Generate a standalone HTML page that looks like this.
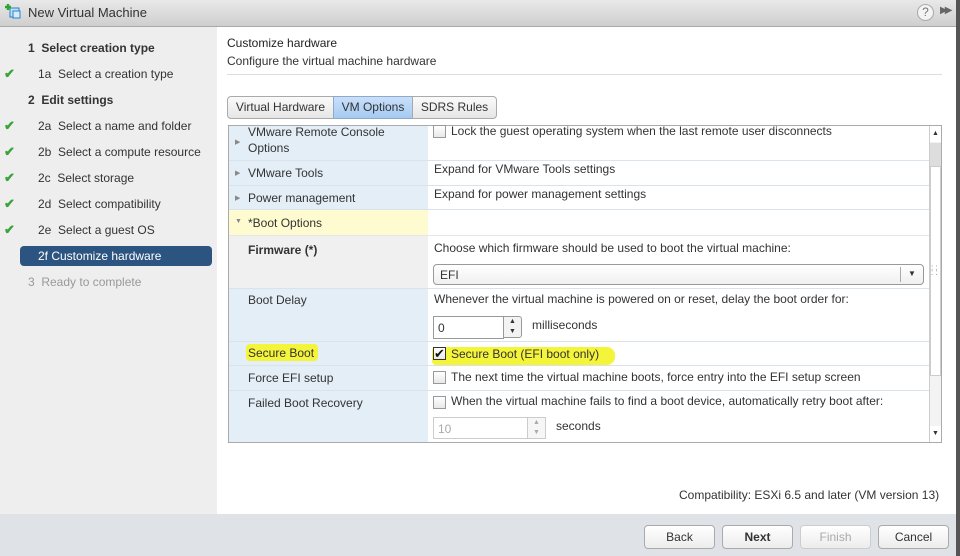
<!DOCTYPE html>
<html><head><meta charset="utf-8"><style>
*{box-sizing:border-box;margin:0;padding:0}
body{width:960px;height:556px;overflow:hidden;font-family:"Liberation Sans",Arial,sans-serif;font-size:12px;color:#333;background:#fff;position:relative}
.abs{position:absolute}
#title{left:0;top:0;width:960px;height:27px;background:linear-gradient(#e9e9e9,#cfcfcf);border-bottom:1px solid #a9a9a9}
#title .t{left:28px;top:5px;font-size:13px;color:#333}
#nav{left:0;top:27px;width:217px;height:487px;background:#eeeeee}
.ni{position:absolute;font-size:12px;color:#333;white-space:nowrap}
.ck{position:absolute;left:4px;color:#3aa33a;font-size:13px;font-weight:bold}
#main{left:217px;top:27px;width:739px;height:487px;background:#fff}
#rb{left:956px;top:0px;width:4px;height:556px;background:#555}
#foot{left:0;top:514px;width:956px;height:42px;background:#dfe3e8}
.btn{position:absolute;top:525px;height:24px;border:1px solid #aaa;border-radius:4px;background:linear-gradient(#fff,#ececec);text-align:center;line-height:22px;font-size:12px;color:#333}
.tab{position:absolute;top:96px;height:23px;border:1px solid #aaa;line-height:21px;text-align:center;font-size:12px;color:#333;background:linear-gradient(#fafafa,#e6e6e6)}
.row{position:absolute;left:229px;width:700px;border-bottom:1px solid #dbe3ea}
.lc{position:absolute;left:0;top:0;bottom:0;width:199px;background:#e4eef6}
.lt{position:absolute;font-size:12px;color:#333;white-space:nowrap}
.rt{position:absolute;left:205px;font-size:12px;color:#333;white-space:nowrap}
.cb{position:absolute;width:13px;height:13px;border:1px solid #999;background:linear-gradient(#fff,#e8e8e8)}
.ar{position:absolute;left:6px;font-size:7px;color:#888}
</style></head><body>
<div id="title" class="abs">
<svg class="abs" style="left:5px;top:3px" width="16" height="16" viewBox="0 0 16 16"><rect x="5" y="5" width="9" height="9" fill="#bfe0f7" stroke="#2a7fc9"/><rect x="8" y="8" width="7" height="7" fill="#d7ecfb" stroke="#2a7fc9"/><path d="M3 1v6M0 4h6" stroke="#2da52d" stroke-width="2.4"/></svg>
<div class="abs t">New Virtual Machine</div>
<div class="abs" style="left:917px;top:4px;width:17px;height:17px;border-radius:50%;border:1px solid #aaa;background:#f4f4f4;text-align:center;line-height:15px;font-size:12px;color:#777">?</div>
<div class="abs" style="left:940px;top:5px;font-size:10px;color:#666;letter-spacing:-3px">▶▶</div>
</div>
<div id="nav" class="abs">
<div class="ni" style="left:28px;top:14px;font-weight:bold">1&nbsp; Select creation type</div>
<div class="ck" style="top:39px">✔</div><div class="ni" style="left:38px;top:40px">1a&nbsp; Select a creation type</div>
<div class="ni" style="left:28px;top:66px;font-weight:bold">2&nbsp; Edit settings</div>
<div class="ck" style="top:91px">✔</div><div class="ni" style="left:38px;top:92px">2a&nbsp; Select a name and folder</div>
<div class="ck" style="top:117px">✔</div><div class="ni" style="left:38px;top:118px">2b&nbsp; Select a compute resource</div>
<div class="ck" style="top:143px">✔</div><div class="ni" style="left:38px;top:144px">2c&nbsp; Select storage</div>
<div class="ck" style="top:169px">✔</div><div class="ni" style="left:38px;top:170px">2d&nbsp; Select compatibility</div>
<div class="ck" style="top:195px">✔</div><div class="ni" style="left:38px;top:196px">2e&nbsp; Select a guest OS</div>
<div class="abs" style="left:20px;top:219px;width:192px;height:20px;background:#2c5480;border-radius:4px"></div>
<div class="ni" style="left:38px;top:222px;color:#fff">2f&nbsp;Customize hardware</div>
<div class="ni" style="left:28px;top:248px;color:#999">3&nbsp; Ready to complete</div>
</div>
<div id="main" class="abs">
<div class="abs" style="left:10px;top:9px;font-size:12px;color:#222">Customize hardware</div>
<div class="abs" style="left:10px;top:27px;font-size:12px;color:#333">Configure the virtual machine hardware</div>
<div class="abs" style="left:10px;top:47px;width:715px;height:1px;background:#ddd"></div>
</div>
<div id="rb" class="abs"></div>
<div class="tab" style="left:227px;width:107px;border-radius:4px 0 0 4px">Virtual Hardware</div>
<div class="tab" style="left:333px;width:80px;background:linear-gradient(#c9e0fa,#a5cbf2);border-color:#8fa9c9">VM Options</div>
<div class="tab" style="left:412px;width:85px;border-radius:0 4px 4px 0">SDRS Rules</div>
<div class="abs" style="left:228px;top:125px;width:714px;height:318px;border:1px solid #aaa;background:#fff"></div>
<div class="row" style="top:126px;height:35px"><div class="lc"></div><div class="ar" style="top:12px">▶</div><div class="lt" style="left:19px;top:-2px;line-height:16px">VMware Remote Console<br>Options</div><div class="cb" style="left:204px;top:-1px"></div><div class="rt" style="left:222px;top:-2px">Lock the guest operating system when the last remote user disconnects</div></div>
<div class="row" style="top:161px;height:25px"><div class="lc"></div><div class="ar" style="top:8px">▶</div><div class="lt" style="left:19px;top:5px">VMware Tools</div><div class="rt" style="top:1px">Expand for VMware Tools settings</div></div>
<div class="row" style="top:186px;height:24px"><div class="lc"></div><div class="ar" style="top:8px">▶</div><div class="lt" style="left:19px;top:5px">Power management</div><div class="rt" style="top:1px">Expand for power management settings</div></div>
<div class="row" style="top:210px;height:26px;border-color:#e6e6e6"><div class="lc" style="background:#fdfbcf"></div><div class="ar" style="top:8px">▼</div><div class="lt" style="left:19px;top:6px">*Boot Options</div></div>
<div class="row" style="top:236px;height:53px"><div class="lc" style="background:#f0f0f0"></div><div class="lt" style="left:19px;top:7px;font-weight:bold">Firmware (*)</div><div class="rt" style="top:5px">Choose which firmware should be used to boot the virtual machine:</div>
<div class="abs" style="left:204px;top:28px;width:491px;height:21px;border:1px solid #999;border-radius:4px;background:linear-gradient(#fff,#f0f0f0)"><span class="abs" style="left:6px;top:3px">EFI</span><div class="abs" style="left:466px;top:2px;width:1px;height:15px;background:#aaa"></div><span class="abs" style="left:474px;top:4px;font-size:8px">▼</span></div></div>
<div class="row" style="top:289px;height:53px"><div class="lc"></div><div class="lt" style="left:19px;top:4px">Boot Delay</div><div class="rt" style="top:3px">Whenever the virtual machine is powered on or reset, delay the boot order for:</div>
<div class="abs" style="left:204px;top:27px;width:71px;height:23px;border:1px solid #999;background:#fff"><span class="abs" style="left:4px;top:4px">0</span></div><div class="abs" style="left:274px;top:27px;width:19px;height:22px;border:1px solid #999;border-radius:0 3px 3px 0;background:#f3f3f3;font-size:7px;text-align:center;line-height:10px">▲<br>▼</div><div class="rt" style="left:303px;top:29px">milliseconds</div></div>
<div class="row" style="top:342px;height:24px"><div class="lc"></div><div class="abs" style="left:17px;top:2px;width:72px;height:17px;background:#f4f43a;border-radius:4px"></div><div class="lt" style="left:19px;top:4px">Secure Boot</div>
<div class="abs" style="left:203px;top:5px;width:183px;height:18px;background:#f4f43a;border-radius:4px 8px 8px 4px"></div><div class="cb" style="left:204px;top:5px;border-color:#333;font-size:13px;line-height:11px;color:#111">✔</div><div class="rt" style="left:222px;top:5px">Secure Boot (EFI boot only)</div></div>
<div class="row" style="top:366px;height:25px"><div class="lc"></div><div class="lt" style="left:19px;top:5px">Force EFI setup</div><div class="cb" style="left:204px;top:5px"></div><div class="rt" style="left:222px;top:4px">The next time the virtual machine boots, force entry into the EFI setup screen</div></div>
<div class="row" style="top:391px;height:51px;border:none"><div class="lc"></div><div class="lt" style="left:19px;top:5px">Failed Boot Recovery</div><div class="cb" style="left:204px;top:5px"></div><div class="rt" style="left:222px;top:3px">When the virtual machine fails to find a boot device, automatically retry boot after:</div>
<div class="abs" style="left:204px;top:26px;width:95px;height:22px;border:1px solid #ccc;background:#fff"><span class="abs" style="left:4px;top:4px;color:#aaa">10</span></div><div class="abs" style="left:298px;top:26px;width:19px;height:22px;border:1px solid #ccc;background:#f6f6f6;font-size:7px;text-align:center;line-height:10px;color:#aaa">▲<br>▼</div><div class="rt" style="left:327px;top:28px">seconds</div></div>
<div class="abs" style="left:929px;top:126px;width:12px;height:316px;background:#f3f3f3;border-left:1px solid #ccc"></div>
<div class="abs" style="left:930px;top:126px;width:11px;height:16px;background:#fff;font-size:7px;text-align:center;line-height:16px">▲</div>
<div class="abs" style="left:930px;top:143px;width:11px;height:23px;background:#ddd"></div>
<div class="abs" style="left:930px;top:166px;width:11px;height:210px;background:#fff;border:1px solid #ccc"></div>
<div class="abs" style="left:930px;top:426px;width:11px;height:16px;background:#fff;font-size:7px;text-align:center;line-height:16px">▼</div>
<div class="abs" style="left:931px;top:265px;font-size:8px;color:#888;line-height:5px">: :<br>: :</div>
<div class="abs" style="left:679px;top:488px;font-size:12px;color:#333">Compatibility: ESXi 6.5 and later (VM version 13)</div>
<div id="foot" class="abs"></div>
<div class="btn" style="left:644px;width:71px">Back</div>
<div class="btn" style="left:722px;width:71px;font-weight:bold">Next</div>
<div class="btn" style="left:800px;width:71px;color:#aaa;border-color:#ccc">Finish</div>
<div class="btn" style="left:878px;width:71px">Cancel</div>
</body></html>
